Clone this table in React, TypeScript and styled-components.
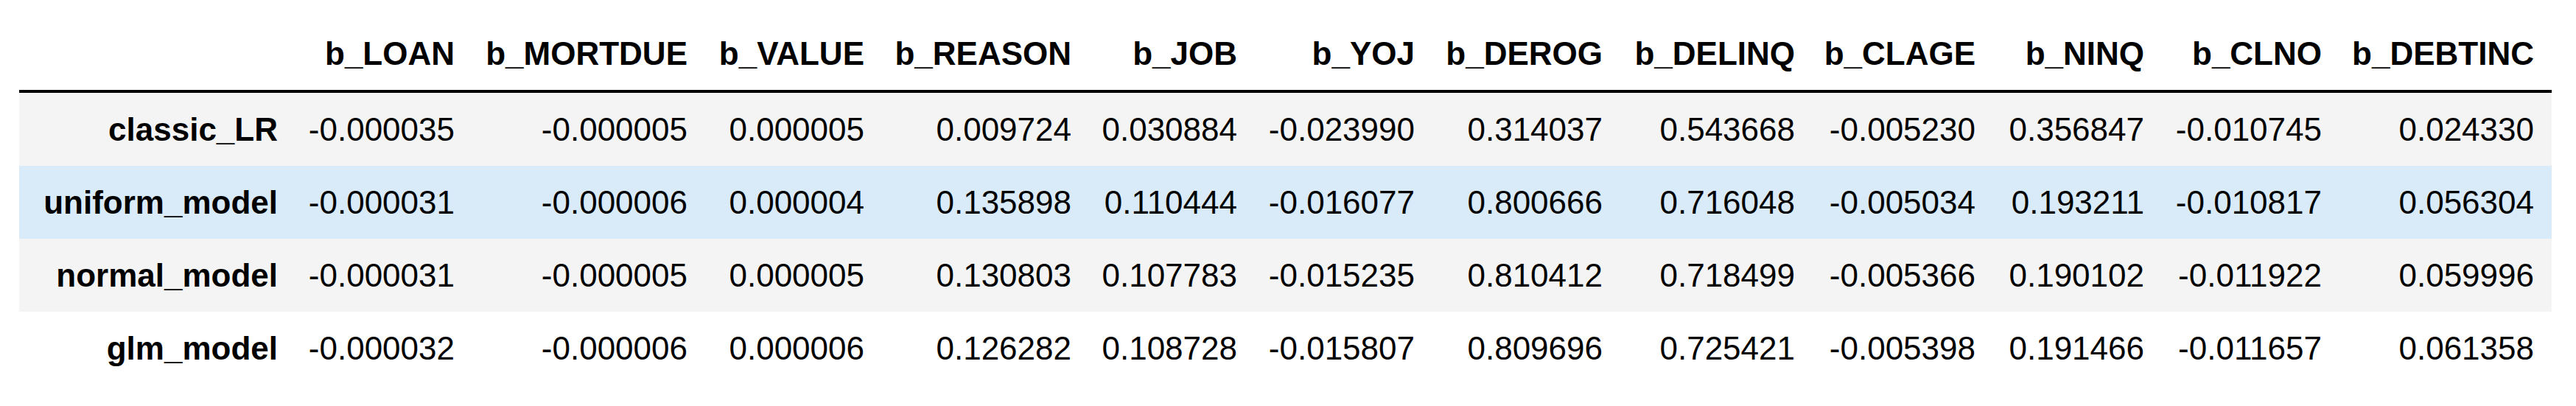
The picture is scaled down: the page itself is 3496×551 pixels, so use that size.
import React from 'react';
import styled, { createGlobalStyle } from 'styled-components';

const GlobalStyle = createGlobalStyle`
  html, body {
    margin: 0;
    padding: 0;
    background: #ffffff;
  }
  body {
    font-family: 'Liberation Sans', Arial, Helvetica, sans-serif;
    color: #000000;
  }
`;

type Row = {
  name: string;
  values: string[];
  hovered?: boolean;
};

const columns = [
  'b_LOAN',
  'b_MORTDUE',
  'b_VALUE',
  'b_REASON',
  'b_JOB',
  'b_YOJ',
  'b_DEROG',
  'b_DELINQ',
  'b_CLAGE',
  'b_NINQ',
  'b_CLNO',
  'b_DEBTINC',
];

// widths measured off the notebook output, index column first
const colWidths = [375, 240, 316, 240, 281, 225, 241, 255, 261, 245, 229, 241, 288];

const rows: Row[] = [
  {
    name: 'classic_LR',
    values: ['-0.000035', '-0.000005', '0.000005', '0.009724', '0.030884', '-0.023990', '0.314037', '0.543668', '-0.005230', '0.356847', '-0.010745', '0.024330'],
  },
  {
    name: 'uniform_model',
    values: ['-0.000031', '-0.000006', '0.000004', '0.135898', '0.110444', '-0.016077', '0.800666', '0.716048', '-0.005034', '0.193211', '-0.010817', '0.056304'],
    hovered: true,
  },
  {
    name: 'normal_model',
    values: ['-0.000031', '-0.000005', '0.000005', '0.130803', '0.107783', '-0.015235', '0.810412', '0.718499', '-0.005366', '0.190102', '-0.011922', '0.059996'],
  },
  {
    name: 'glm_model',
    values: ['-0.000032', '-0.000006', '0.000006', '0.126282', '0.108728', '-0.015807', '0.809696', '0.725421', '-0.005398', '0.191466', '-0.011657', '0.061358'],
  },
];

const App = () => {
  return (
    <Output>
      <GlobalStyle />
      <DataFrame>
        <colgroup>
          {colWidths.map((w, i) => (
            <col key={i} style={{ width: w }} />
          ))}
        </colgroup>
        <thead>
          <tr>
            <HeadCell />
            {columns.map((c) => (
              <HeadCell key={c}>{c}</HeadCell>
            ))}
          </tr>
        </thead>
        <tbody>
          {rows.map((row, i) => (
            <BodyRow key={row.name} striped={i % 2 === 0} hovered={!!row.hovered}>
              <IndexCell>{row.name}</IndexCell>
              {row.values.map((v, j) => (
                <ValueCell key={j}>{v}</ValueCell>
              ))}
            </BodyRow>
          ))}
        </tbody>
      </DataFrame>
    </Output>
  );
};

const Output = styled.div`
  padding: 23px 0 0 26px;
  width: 3470px;
  height: 528px;
`;

const DataFrame = styled.table`
  table-layout: fixed;
  width: 3437px;
  border-collapse: separate;
  border-spacing: 0;
  font-size: 44px;
  line-height: 51px;
  color: #000000;
`;

const HeadCell = styled.th`
  text-align: right;
  font-weight: bold;
  padding: 24px 24px 24px 0;
  border-bottom: 4px solid #000000;
  white-space: nowrap;
  vertical-align: middle;
`;

const BodyRow = styled.tr<{ striped: boolean; hovered: boolean }>`
  background: ${(props) =>
    props.hovered ? '#d9eaf9' : props.striped ? '#f4f4f4' : '#ffffff'};
`;

const IndexCell = styled.th`
  text-align: right;
  font-weight: bold;
  padding: 24px 24px 24px 0;
  white-space: nowrap;
  vertical-align: middle;
`;

const ValueCell = styled.td`
  text-align: right;
  padding: 24px 24px 24px 0;
  white-space: nowrap;
  vertical-align: middle;
`;

export default App;
